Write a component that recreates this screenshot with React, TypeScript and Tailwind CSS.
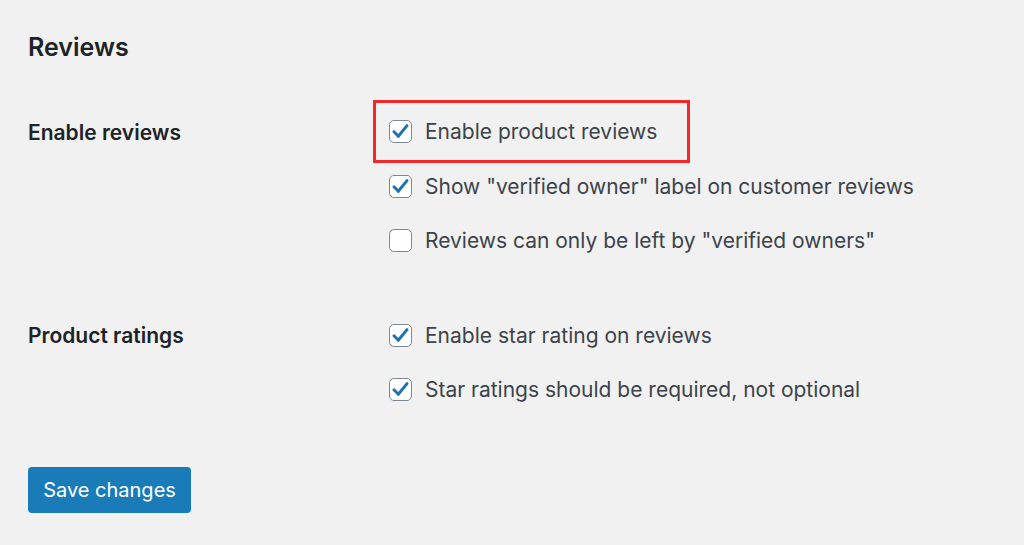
import { useState } from 'react';

type Option = { id: string; label: string; checked: boolean; highlight?: boolean };

const Check = ({ checked, onChange }: { checked: boolean; onChange: () => void }) => (
  <button
    type="button"
    onClick={onChange}
    className="w-[23px] h-[23px] shrink-0 rounded-[5px] border border-[#7e8993] bg-white flex items-center justify-center"
  >
    {checked && (
      <svg viewBox="0 0 21 21" className="w-[21px] h-[21px]">
        <path d="M4 10.8 L8.3 15.3 L17 4.6" fill="none" stroke="#2271b1" strokeWidth="3" strokeLinecap="round" strokeLinejoin="round" />
      </svg>
    )}
  </button>
);

const Row = ({ opt, toggle }: { opt: Option; toggle: () => void }) => {
  const inner = (
    <label className="flex items-center gap-[13px] cursor-pointer h-[23px]">
      <Check checked={opt.checked} onChange={toggle} />
      <span className="text-[21px] text-[#3c434a]">{opt.label}</span>
    </label>
  );
  if (opt.highlight) {
    return (
      <div className="-ml-[16px] mt-[-21px] mb-[-19px] py-[17px] pl-[13px] w-[317px] border-[3px] border-[#f5272b]">
        {inner}
      </div>
    );
  }
  return inner;
};

export default function App() {
  const [reviews, setReviews] = useState<Option[]>([
    { id: 'enable', label: 'Enable product reviews', checked: true, highlight: true },
    { id: 'verified', label: 'Show "verified owner" label on customer reviews', checked: true },
    { id: 'only', label: 'Reviews can only be left by "verified owners"', checked: false },
  ]);
  const [ratings, setRatings] = useState<Option[]>([
    { id: 'stars', label: 'Enable star rating on reviews', checked: true },
    { id: 'required', label: 'Star ratings should be required, not optional', checked: true },
  ]);

  const toggle = (list: Option[], set: (o: Option[]) => void, id: string) =>
    set(list.map(o => (o.id === id ? { ...o, checked: !o.checked } : o)));

  return (
    <div className="min-h-[545px] bg-[#f1f1f1] px-[28px] pt-[32px] font-['Inter',sans-serif]">
      <h2 className="text-[25px] font-semibold text-[#1d2327] leading-[30px]">Reviews</h2>

      <div className="mt-[59px] flex">
        <div className="w-[361px] text-[21px] font-semibold text-[#1d2327] leading-[23px]">Enable reviews</div>
        <div className="flex flex-col gap-[31px]">
          {reviews.map(o => (
            <Row key={o.id} opt={o} toggle={() => toggle(reviews, setReviews, o.id)} />
          ))}
        </div>
      </div>

      <div className="mt-[72px] flex">
        <div className="w-[361px] text-[21px] font-semibold text-[#1d2327] leading-[23px]">Product ratings</div>
        <div className="flex flex-col gap-[31px]">
          {ratings.map(o => (
            <Row key={o.id} opt={o} toggle={() => toggle(ratings, setRatings, o.id)} />
          ))}
        </div>
      </div>

      <button className="mt-[66px] w-[163px] h-[46px] rounded-[4px] bg-[#1a7bb9] text-white text-[20px]">
        Save changes
      </button>
    </div>
  );
}
